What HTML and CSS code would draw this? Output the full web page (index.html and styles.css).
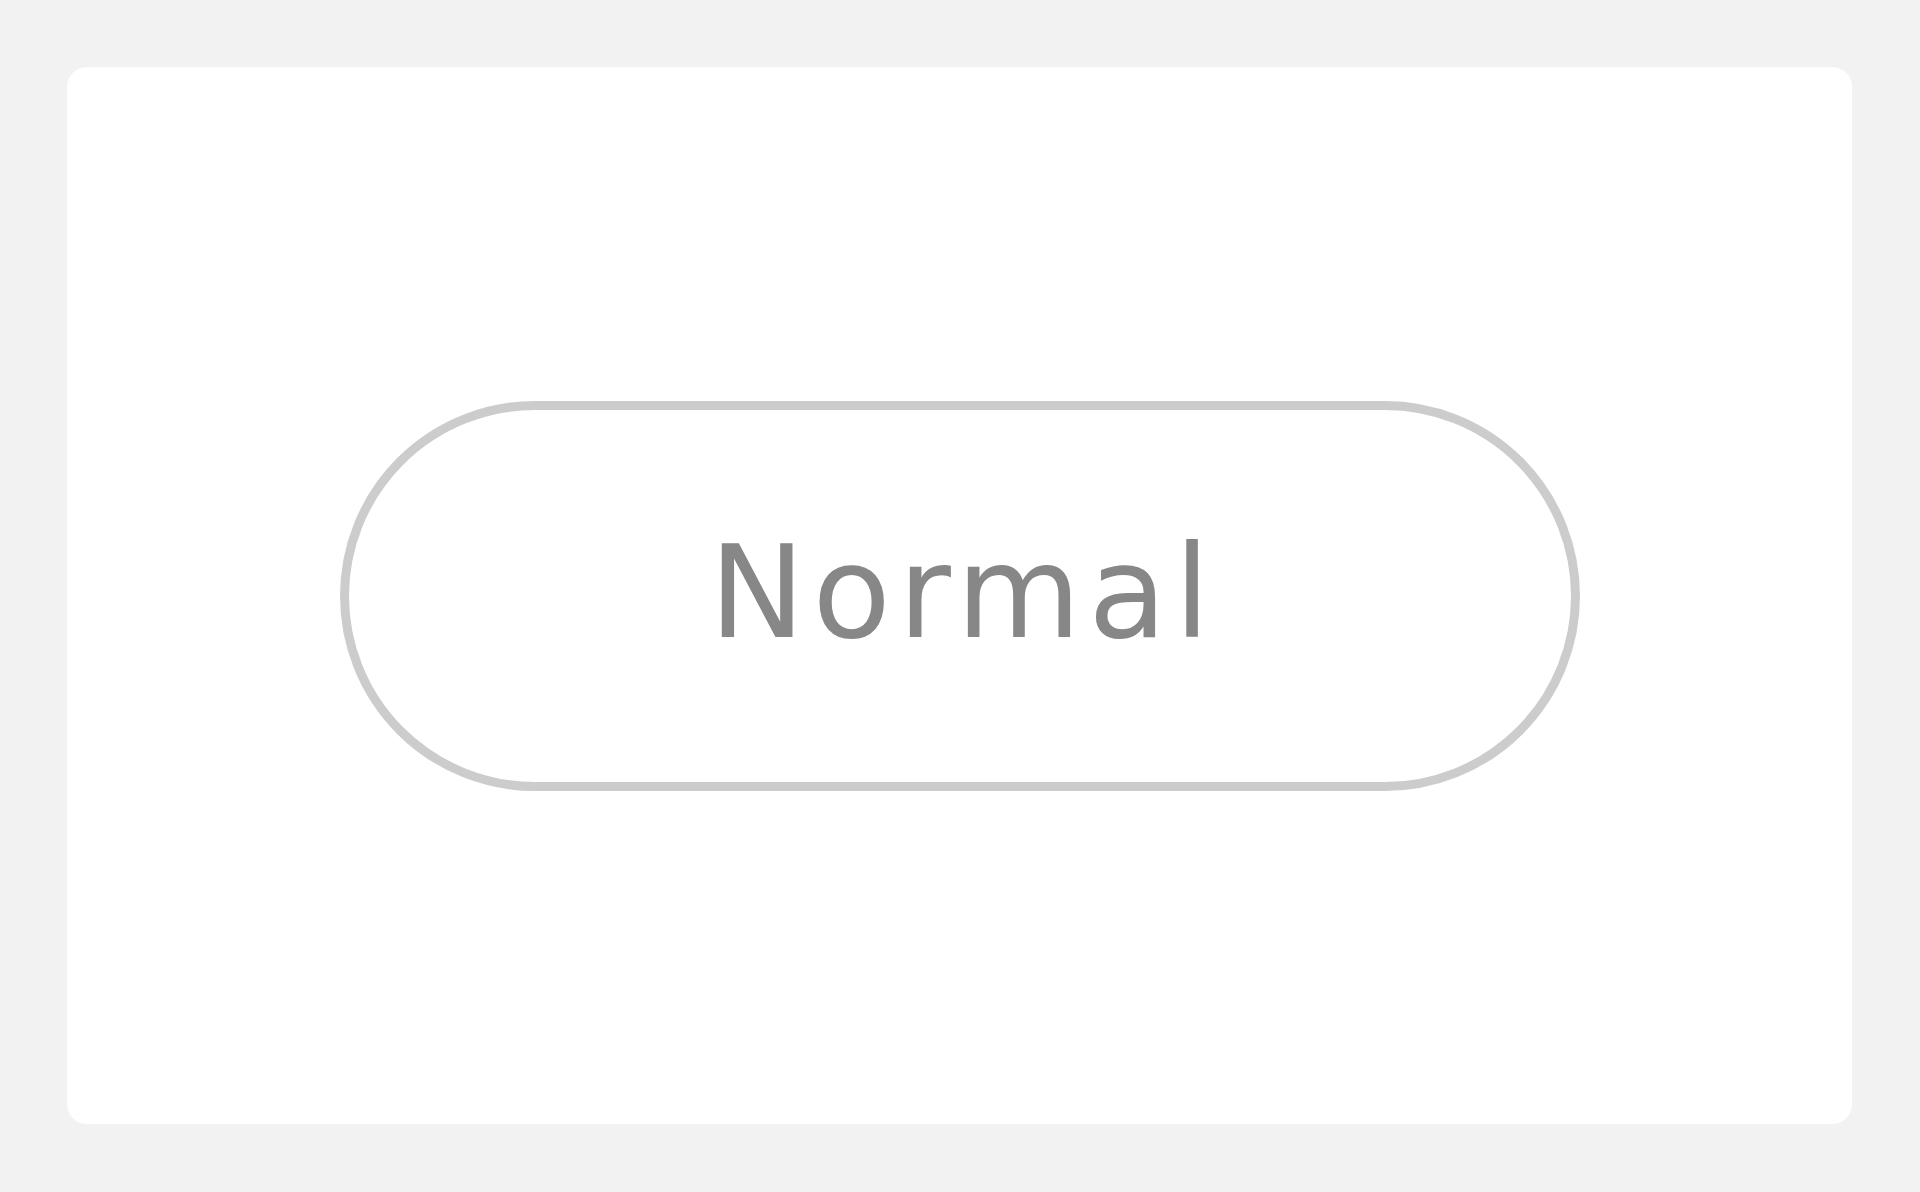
FILE: index.html
```html
<!DOCTYPE html>
<html lang="en">
<head>
<meta charset="utf-8">
<title>Normal</title>
<link rel="stylesheet" href="styles.css">
</head>
<body>
<main class="card">
  <button class="pill" type="button"><span class="pill-label">Normal</span></button>
</main>
</body>
</html>
```
FILE: styles.css
```css
html, body {
  margin: 0;
  padding: 0;
  height: 100%;
}
body {
  background: #f2f2f2;
  box-sizing: border-box;
  padding: 67px 68px 68px 67px;
  display: flex;
}
.card {
  flex: 1;
  background: #ffffff;
  border-radius: 20px;
  display: flex;
  align-items: center;
  justify-content: center;
}
.pill {
  box-sizing: border-box;
  width: 1240px;
  height: 390px;
  border: 9px solid #cccccc;
  border-radius: 195px;
  background: #ffffff;
  color: #878787;
  font-family: "DejaVu Sans", sans-serif;
  font-size: 128px;
  font-weight: 400;
  line-height: 1;
  padding: 0 0 6px 0;
  display: flex;
  align-items: center;
  justify-content: center;
}
.pill-label {
  letter-spacing: 7.5px;
  margin-right: -7.5px;
}
```
